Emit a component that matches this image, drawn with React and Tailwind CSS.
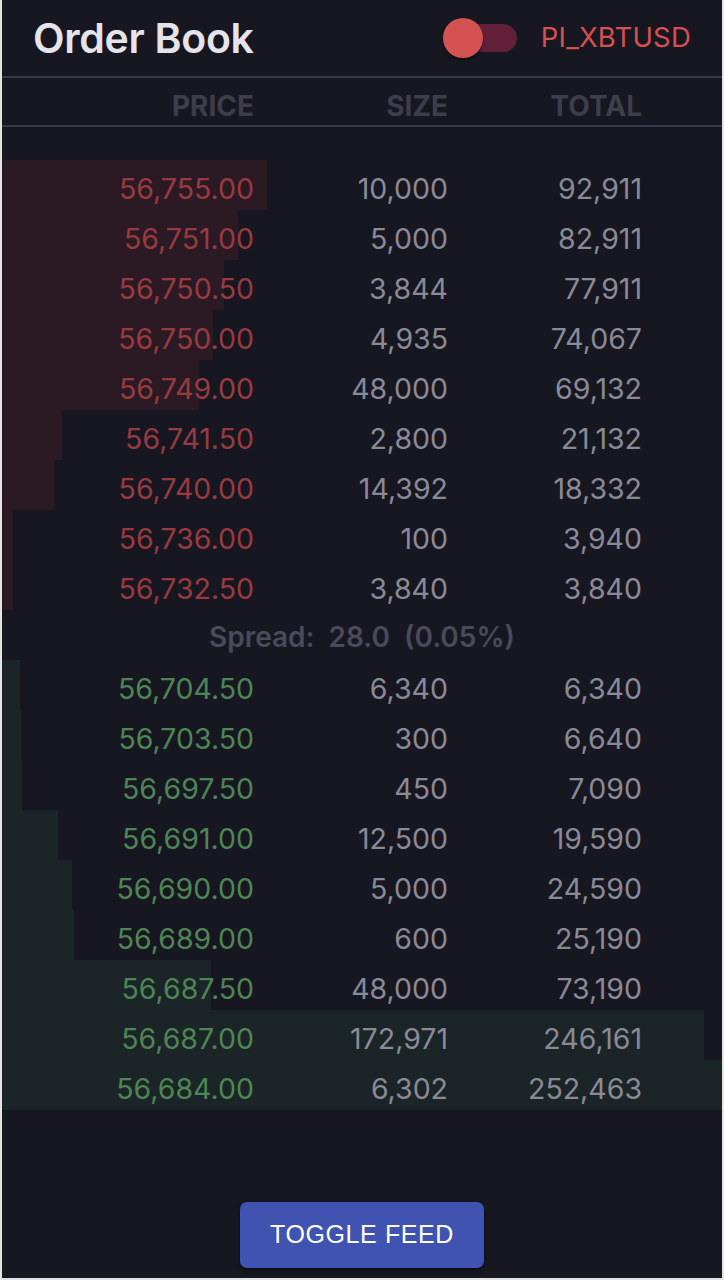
import React from "react";

const asks = [
  ["56,755.00", "10,000", "92,911", 92911],
  ["56,751.00", "5,000", "82,911", 82911],
  ["56,750.50", "3,844", "77,911", 77911],
  ["56,750.00", "4,935", "74,067", 74067],
  ["56,749.00", "48,000", "69,132", 69132],
  ["56,741.50", "2,800", "21,132", 21132],
  ["56,740.00", "14,392", "18,332", 18332],
  ["56,736.00", "100", "3,940", 3940],
  ["56,732.50", "3,840", "3,840", 3840],
];

const bids = [
  ["56,704.50", "6,340", "6,340", 6340],
  ["56,703.50", "300", "6,640", 6640],
  ["56,697.50", "450", "7,090", 7090],
  ["56,691.00", "12,500", "19,590", 19590],
  ["56,690.00", "5,000", "24,590", 24590],
  ["56,689.00", "600", "25,190", 25190],
  ["56,687.50", "48,000", "73,190", 73190],
  ["56,687.00", "172,971", "246,161", 246161],
  ["56,684.00", "6,302", "252,463", 252463],
];

const MAX_TOTAL = 252463;

function Row({ row, side }) {
  const [price, size, total, raw] = row;
  const pct = (raw / MAX_TOTAL) * 100;
  return (
    <div className="relative h-[50px]">
      {/* depth bar */}
      <div
        className={`absolute left-0 top-0 h-full ${side === "ask" ? "bg-[#2b1a24]" : "bg-[#1b2427]"}`}
        style={{ width: `${pct}%` }}
      />
      <div className="relative grid grid-cols-[194px_194px_194px] ml-[58px] h-full items-center pt-[9px] text-[28.5px] leading-none">
        <span className={`text-right ${side === "ask" ? "text-[#983a40]" : "text-[#4d8654]"}`}>{price}</span>
        <span className="text-right text-[#8a8a97]">{size}</span>
        <span className="text-right text-[#8a8a97]">{total}</span>
      </div>
    </div>
  );
}

export default function App() {
  return (
    <div
      className="w-[724px] h-[1280px] bg-[#171721] border-x-2 border-b-2 border-[#e4e4e7] flex flex-col"
      style={{ fontFamily: "Inter, 'Noto Sans', sans-serif" }}
    >
      {/* Header */}
      <div className="h-[78px] shrink-0 flex items-center justify-between pl-[31px] pr-[31px] border-b-2 border-[#393945]">
        <h1 className="text-[41px] font-semibold text-[#e4e4ea] tracking-[-0.3px] pt-[1px]">Order Book</h1>
        <div className="flex items-center gap-[24px]">
          <div className="relative w-[74px] h-[40px] flex items-center">
            <div className="absolute left-[16px] right-0 h-[28px] rounded-full bg-[#611f38]" />
            <div className="absolute left-0 w-[40px] h-[40px] rounded-full bg-[#d55252] shadow-[0_2px_3px_rgba(0,0,0,0.45)]" />
          </div>
          <span className="text-[27.5px] text-[#d65050] tracking-[0.2px]">PI_XBTUSD</span>
        </div>
      </div>

      {/* Column titles */}
      <div className="h-[49px] shrink-0 border-b-2 border-[#393945]">
        <div className="grid grid-cols-[194px_194px_194px] ml-[58px] h-full items-center pt-[9px] text-[28px] font-bold leading-none text-[#3e3d4b]">
          <span className="text-right">PRICE</span>
          <span className="text-right">SIZE</span>
          <span className="text-right">TOTAL</span>
        </div>
      </div>

      <div className="mt-[33px]">
        {asks.map((r) => (
          <Row key={r[0]} row={r} side="ask" />
        ))}
        <div className="h-[50px] flex items-center justify-center pt-[4px] text-[28px] font-semibold text-[#4a4a58] whitespace-pre leading-none">
          {"Spread:  28.0  (0.05%)"}
        </div>
        {bids.map((r) => (
          <Row key={r[0]} row={r} side="bid" />
        ))}
      </div>

      <div className="mt-auto flex justify-center pb-[10px]">
        <button
          className="w-[244px] h-[66px] rounded-[7px] bg-[#4153b0] text-white text-[25px] tracking-[0.6px] shadow-[0_3px_4px_rgba(0,0,0,0.45)]"
          style={{ fontFamily: "'Liberation Sans', Arial, sans-serif" }}
        >
          TOGGLE FEED
        </button>
      </div>
    </div>
  );
}
